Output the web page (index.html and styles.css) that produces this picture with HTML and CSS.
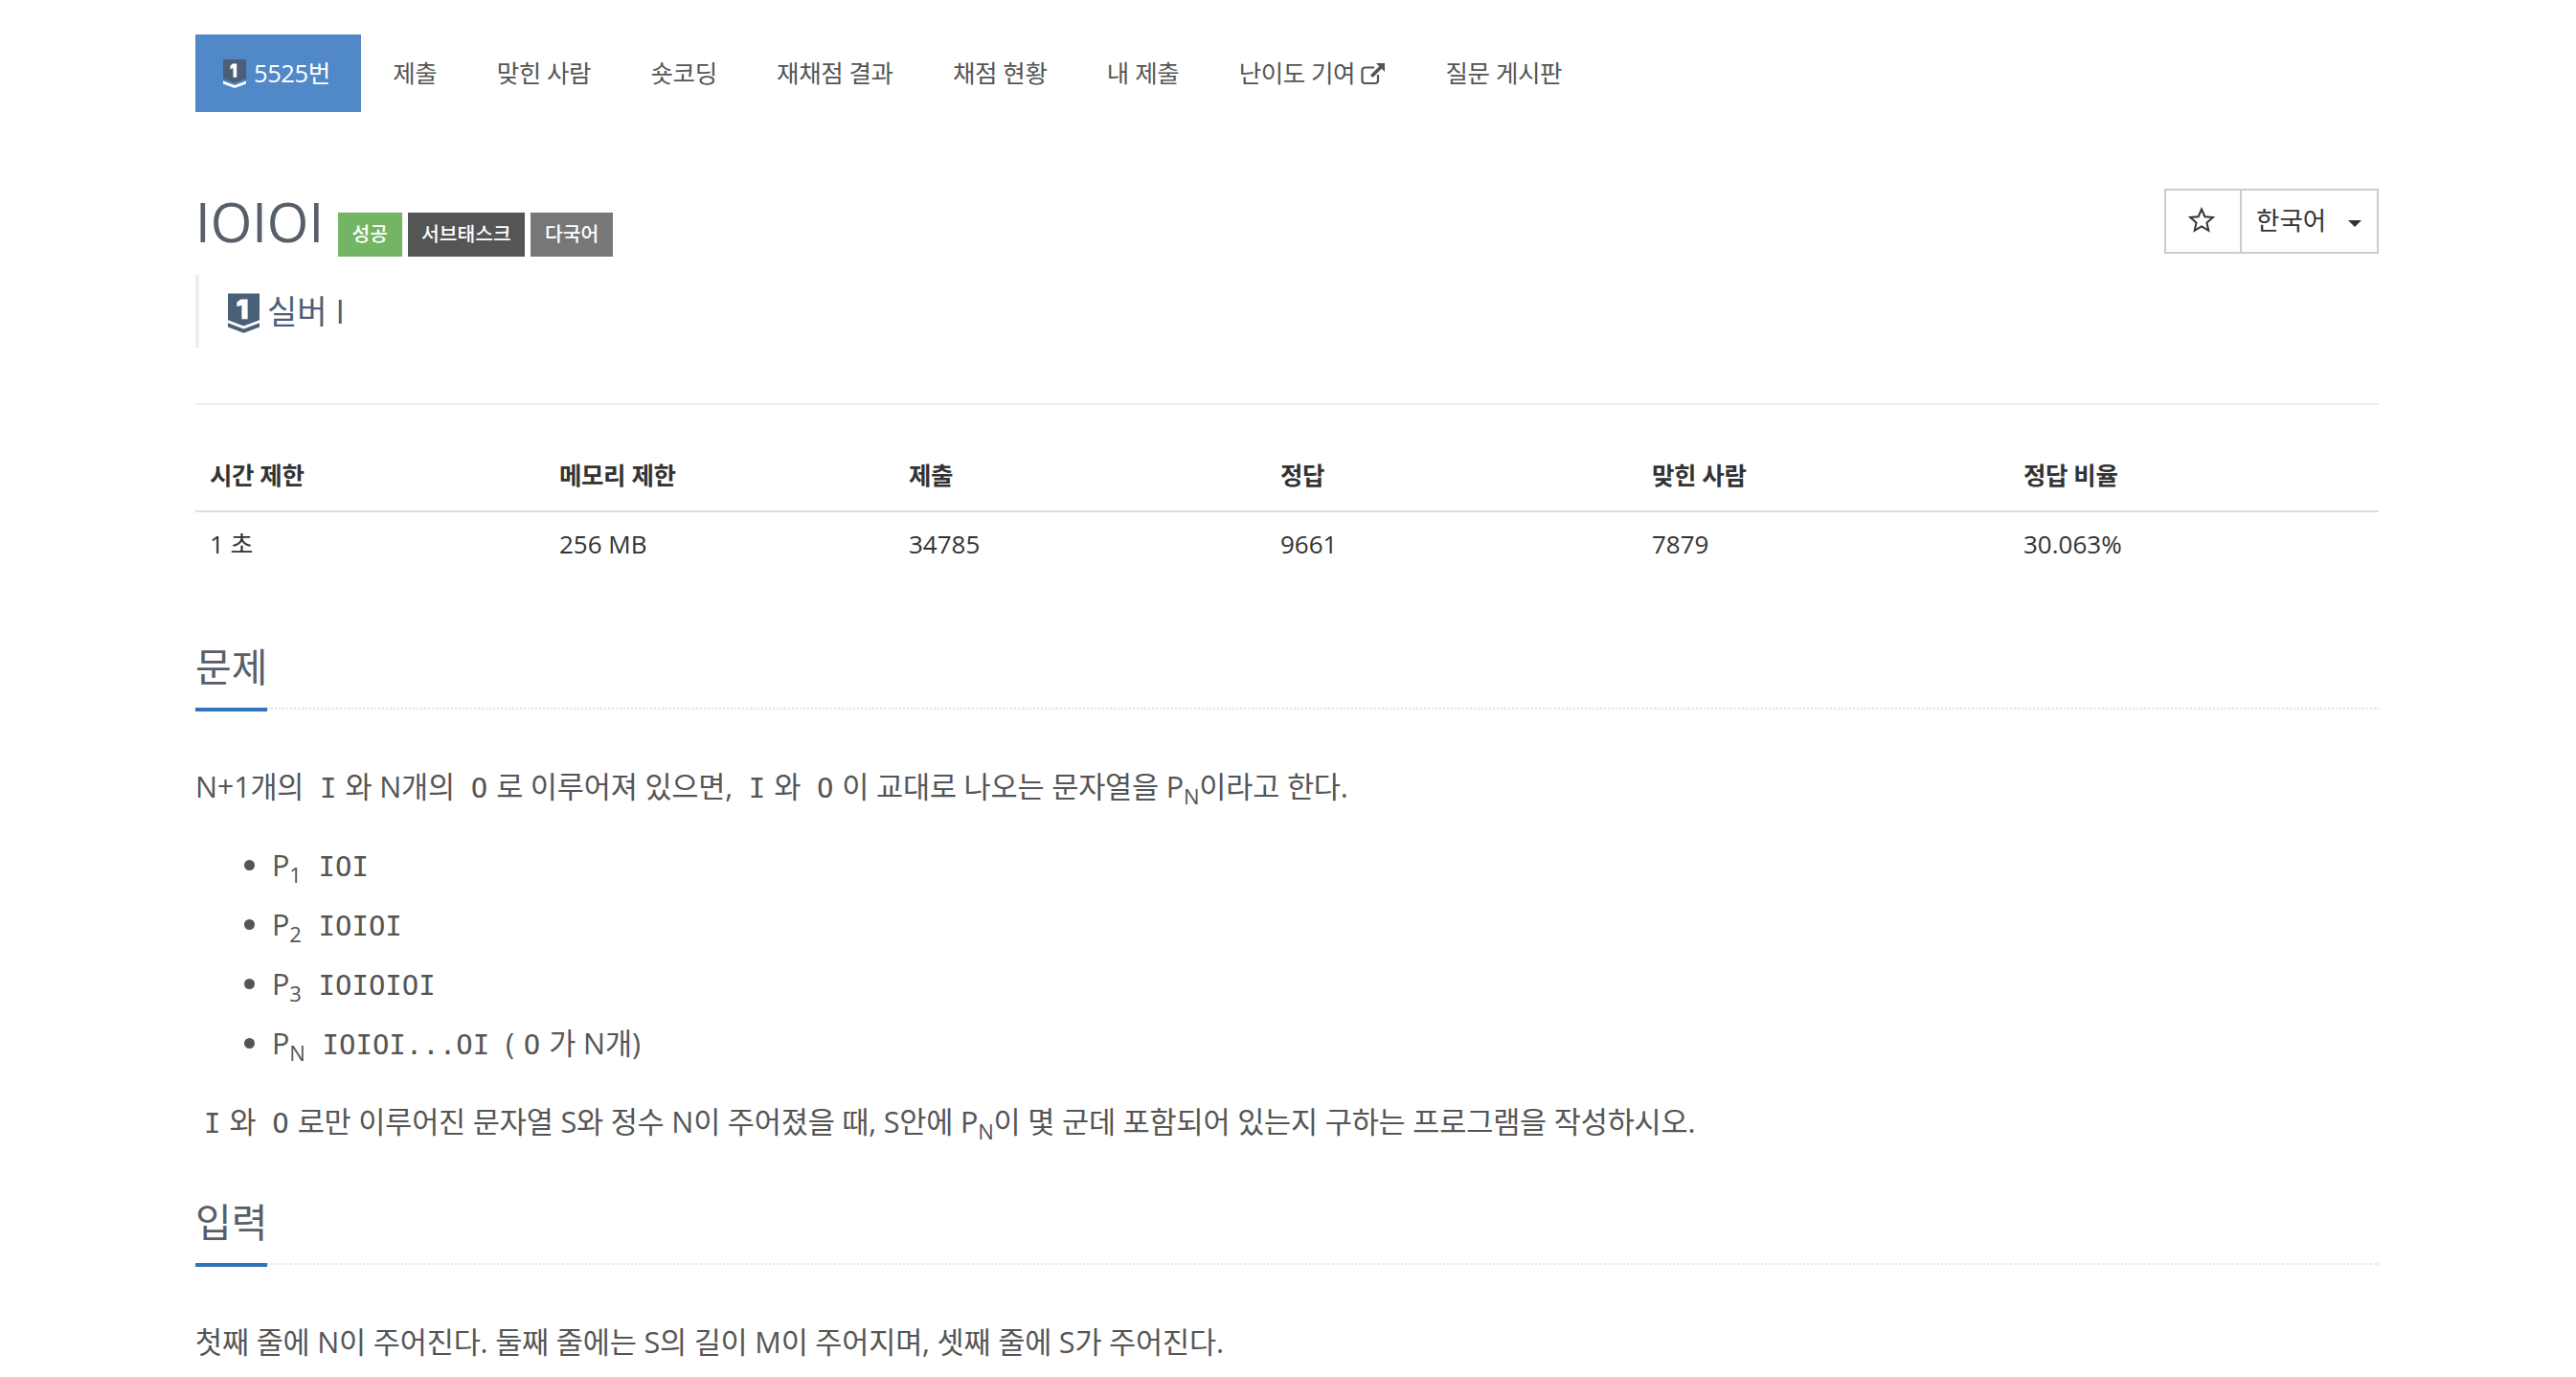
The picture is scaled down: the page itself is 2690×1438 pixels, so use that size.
FILE: index.html
```html
<!DOCTYPE html>
<html lang="ko">
<head>
    <meta charset="UTF-8">
    <meta name="viewport" content="width=device-width, initial-scale=1.0">
    <title>5525번: IOIOI</title>
    <link rel="stylesheet" href="styles.css">
</head>
<body>
    <div class="container">
        <ul class="tabs">
            <li class="tab active">
                <svg class="tier tier-small" viewBox="0 0 32 40"><path d="M0 0H32V27L16 33L0 27Z" fill="#4a6079"/><path d="M0 30L16 36L32 30V34L16 40L0 34Z" fill="#fff"/><path d="M13 6H19V25H14V12L10 13.500V9Z" fill="#fff"/></svg>
                5525번
            </li>
            <li class="tab">제출</li>
            <li class="tab">맞힌 사람</li>
            <li class="tab">숏코딩</li>
            <li class="tab">재채점 결과</li>
            <li class="tab">채점 현황</li>
            <li class="tab">내 제출</li>
            <li class="tab">
                난이도 기여
                <svg class="ext" viewBox="0 0 26 24"><path d="M18 13V19A3 3 0 0 1 15 22H4A3 3 0 0 1 1.500 19V8A3 3 0 0 1 4 5.500H14" fill="none" stroke="#555" stroke-width="2.200"/><path d="M16 1H25V10L21.800 6.800L12.500 16L10 13.500L19.200 4.200Z" fill="#555"/></svg>
            </li>
            <li class="tab">질문 게시판</li>
        </ul>

        <div class="title-row">
            <div class="title-left">
                <h1 class="title">IOIOI</h1>
                <span class="label label-green">성공</span>
                <span class="label label-dark">서브태스크</span>
                <span class="label label-gray">다국어</span>
            </div>
            <div class="btn-group">
                <div class="btn btn-star">
                    <svg class="star" viewBox="0 0 28 27"><path d="M14 2.500L17.400 10.200L25.800 11L19.500 16.600L21.300 24.800L14 20.500L6.700 24.800L8.500 16.600L2.200 11L10.600 10.200Z" fill="none" stroke="#333" stroke-width="2"/></svg>
                </div>
                <div class="btn btn-lang">한국어<span class="caret"></span></div>
            </div>
        </div>

        <blockquote class="tier-line">
            <svg class="tier tier-big" viewBox="0 0 32 40"><path d="M0 0H32V27L16 33L0 27Z" fill="#4a6079"/><path d="M0 30L16 36L32 30V34L16 40L0 34Z" fill="#4a6079"/><path d="M13 6H20V26H14V12L9 13.500V9Z" fill="#fff"/></svg>
            <span>실버 I</span>
        </blockquote>

        <hr class="rule">

        <table class="info">
            <thead>
                <tr>
                    <th class="col-a">시간 제한</th>
                    <th class="col-a">메모리 제한</th>
                    <th class="col-b">제출</th>
                    <th class="col-b">정답</th>
                    <th class="col-b">맞힌 사람</th>
                    <th>정답 비율</th>
                </tr>
            </thead>
            <tbody>
                <tr>
                    <td>1 초</td>
                    <td>256 MB</td>
                    <td>34785</td>
                    <td>9661</td>
                    <td>7879</td>
                    <td>30.063%</td>
                </tr>
            </tbody>
        </table>

        <section class="section">
            <div class="headline"><h2>문제</h2></div>
            <p>N+1개의 <code>I</code>와 N개의 <code>O</code>로 이루어져 있으면, <code>I</code>와 <code>O</code>이 교대로 나오는 문자열을 P<sub>N</sub>이라고 한다.</p>
            <ul class="list">
                <li>P<sub>1</sub> <code>IOI</code></li>
                <li>P<sub>2</sub> <code>IOIOI</code></li>
                <li>P<sub>3</sub> <code>IOIOIOI</code></li>
                <li>P<sub>N</sub> <code>IOIOI...OI</code> (<code>O</code>가 N개)</li>
            </ul>
            <p><code>I</code>와 <code>O</code>로만 이루어진 문자열 S와 정수 N이 주어졌을 때, S안에 P<sub>N</sub>이 몇 군데 포함되어 있는지 구하는 프로그램을 작성하시오.</p>
        </section>

        <section class="section section-next">
            <div class="headline"><h2>입력</h2></div>
            <p>첫째 줄에 N이 주어진다. 둘째 줄에는 S의 길이 M이 주어지며, 셋째 줄에 S가 주어진다.</p>
        </section>
    </div>
</body>
</html>
```

FILE: styles.css
```css
html {
    overflow: hidden;
}
body {
    font-family: "Open Sans", "Noto Sans CJK KR", sans-serif;
    font-size: 25.500px;
    line-height: 1.43;
    color: #555;
    background-color: #fff;
    margin: 0;
}
.container {
    width: 2280px;
    margin-left: 204px;
    padding-top: 36px;
}
.tabs {
    display: flex;
    list-style: none;
    margin: 0;
    padding: 0;
}
.tab {
    display: flex;
    align-items: center;
    height: 81px;
    padding: 0 31.200px;
    letter-spacing: -0.4px;
}
.tab.active {
    background: #5188c7;
    color: #fff;
    width: 173px;
    box-sizing: border-box;
    padding: 0 0 0 29px;
    margin-right: 2px;
}
.tier-small {
    width: 24px;
    height: 30px;
    margin-right: 8px;
}
.ext {
    width: 26px;
    height: 24px;
    margin-left: 6px;
}
.title-row {
    display: flex;
    justify-content: space-between;
    margin-top: 80px;
}
.title-left {
    display: flex;
    align-items: flex-start;
}
.title {
    font-size: 56px;
    font-weight: 400;
    line-height: 66px;
    margin: 0 15px 0 0;
    padding-top: 1px;
    color: #585f69;
}
.label {
    margin: 25px 6px 0 0;
    height: 46px;
    padding: 0 14.500px;
    display: flex;
    align-items: center;
    color: #fff;
    font-size: 20.400px;
    font-weight: 500;
}
.label-green { background: #73b564; }
.label-dark { background: #555; }
.label-gray { background: #777; }
.btn-group {
    display: flex;
    height: 68px;
    border: 2px solid #ccc;
    box-sizing: border-box;
    color: #333;
    font-size: 26.500px;
}
.btn {
    display: flex;
    align-items: center;
}
.btn-star {
    width: 77px;
    justify-content: center;
    border-right: 2px solid #ccc;
}
.star {
    width: 28px;
    height: 27px;
    margin: 0 3px 3px 0;
}
.btn-lang {
    width: 141px;
    padding-left: 15px;
    box-sizing: border-box;
}
.caret {
    border-top: 7px solid #333;
    border-left: 7.500px solid transparent;
    border-right: 7.500px solid transparent;
    margin: 5px 0 0 23px;
}
.tier-line {
    display: flex;
    align-items: center;
    margin: 19px 0 0;
    height: 76px;
    padding-left: 30px;
    border-left: 4px solid #eee;
    font-size: 34px;
    color: #4a6079;
}
.tier-big {
    width: 33px;
    height: 42px;
    margin: 4px 8px 0 0;
}
.rule {
    border: 0;
    border-top: 2px solid #eee;
    margin: 58px 0 0;
}
.info {
    width: 100%;
    border-collapse: collapse;
    margin-top: 34px;
    color: #333;
}
.info th, .info td {
    padding: 0 15px;
    text-align: left;
}
.info th {
    height: 73px;
    padding-top: 3px;
    font-weight: 700;
    letter-spacing: -0.4px;
    border-bottom: 2px solid #ddd;
}
.info td {
    height: 67px;
    padding-bottom: 3px;
    font-size: 26px;
}
.col-a { width: 335px; }
.col-b { width: 358px; }
.section {
    margin-top: 58px;
}
.section-next {
    margin-top: 50px;
}
.headline {
    display: flex;
    border-bottom: 2px dotted #e5e5ee;
}
.headline h2 {
    font-size: 41px;
    font-weight: 400;
    line-height: 66px;
    margin: 0 0 -4px;
    padding-bottom: 10px;
    color: #585f69;
    border-bottom: 4px solid #2e74b8;
}
.section p {
    font-size: 30.600px;
    line-height: 44px;
    margin: 38px 0 0;
    letter-spacing: -0.2px;
}
.section .headline + p {
    margin-top: 58px;
}
.list {
    font-size: 30.600px;
    line-height: 44px;
    letter-spacing: -0.15px;
    margin: 38px 0 0;
    padding-left: 80px;
}
.list li {
    margin-bottom: 18px;
}
.list li:last-child {
    margin-bottom: 0;
}
code {
    font-family: "DejaVu Sans Mono", monospace;
    font-size: 29px;
    line-height: 1;
    letter-spacing: 0;
    padding: 0 9px;
}
.list code {
    padding: 0 9px 0 10px;
}
sub {
    font-size: 22px;
    line-height: 0;
}
```
